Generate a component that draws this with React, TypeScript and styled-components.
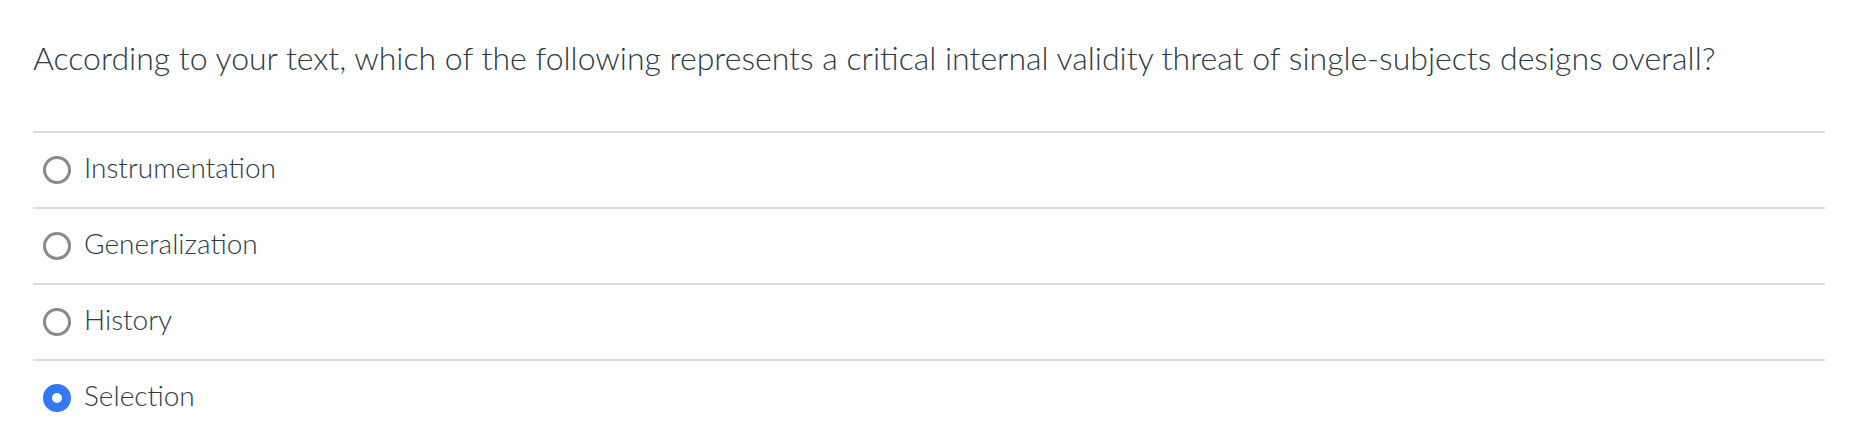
import React from "react";
import styled, { createGlobalStyle } from "styled-components";

const GlobalStyle = createGlobalStyle`
  html, body {
    margin: 0;
    padding: 0;
    background: #ffffff;
  }
  body {
    font-family: Lato, "Open Sans", sans-serif;
    color: #2d3b45;
  }
`;

const Container = styled.div`
  padding: 0 28px 0 33px;
  box-sizing: border-box;
  width: 100%;
`;

const QuestionText = styled.p`
  margin: 0;
  padding: 36px 0 51px 0;
  font-size: 32px;
  font-weight: 300;
  line-height: 44px;
  color: #2d3b45;
  border-bottom: 2px solid #dcdcdc;
`;

const AnswerList = styled.div`
  display: flex;
  flex-direction: column;
`;

const AnswerRow = styled.label<{ $last?: boolean }>`
  display: flex;
  align-items: center;
  gap: 13px;
  height: 74px;
  padding-left: 10px;
  border-bottom: ${(p) => (p.$last ? "none" : "2px solid #dcdcdc")};
  cursor: pointer;
`;

const Radio = styled.span<{ $checked?: boolean }>`
  flex: none;
  width: 28px;
  height: 28px;
  border-radius: 50%;
  box-sizing: border-box;
  background: #ffffff;
  border: ${(p) => (p.$checked ? "9px solid #3478f6" : "3px solid #8a8a8a")};
`;

const AnswerText = styled.span`
  font-size: 28px;
  font-weight: 300;
  color: #2d3b45;
  line-height: 1;
  margin-bottom: 6px;
`;

const answers = [
  { text: "Instrumentation", checked: false },
  { text: "Generalization", checked: false },
  { text: "History", checked: false },
  { text: "Selection", checked: true },
];

const App: React.FC = () => {
  return (
    <Container>
      <GlobalStyle />
      <QuestionText>
        According to your text, which of the following represents a critical internal validity threat of
        single-subjects designs overall?
      </QuestionText>
      <AnswerList>
        {answers.map((a, i) => (
          <AnswerRow key={a.text} $last={i === answers.length - 1}>
            <Radio $checked={a.checked} />
            <AnswerText>{a.text}</AnswerText>
          </AnswerRow>
        ))}
      </AnswerList>
    </Container>
  );
};

export default App;
